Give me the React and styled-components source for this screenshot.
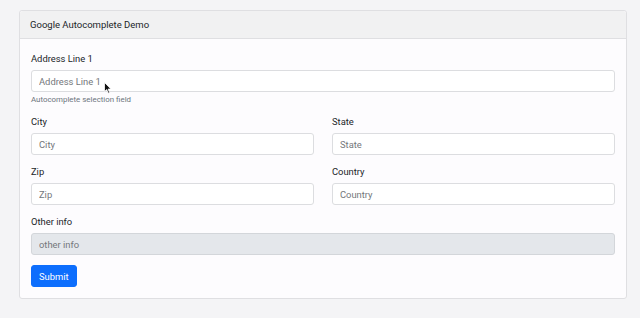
import styled, { createGlobalStyle } from "styled-components";

const Global = createGlobalStyle`
    html, body{
        margin: 0;
        padding: 0;
        background: #f4f4f6;
        font-family: Roboto, "Liberation Sans", Arial, sans-serif;
        color: #212529;
    }
    *{
        box-sizing: border-box;
    }
`

export default function App(){
    return(
        <>
            <Global/>
            <Page>
                <Card>
                    <CardHeader>Google Autocomplete Demo</CardHeader>
                    <CardBody>
                        <Field>
                            <Label>Address Line 1</Label>
                            <InputWrap>
                                <Input placeholder="Address Line 1"/>
                                <Cursor width="8" height="12" viewBox="0 0 8 12">
                                    <path d="M0.5 0.5 L0.5 9.5 L2.7 7.6 L4.3 11.2 L5.6 10.6 L4.1 7.1 L7 7.1 Z" fill="#111" stroke="#fff" strokeWidth="0.8"/>
                                </Cursor>
                            </InputWrap>
                            <Help>Autocomplete selection field</Help>
                        </Field>
                        <Row>
                            <Field>
                                <Label>City</Label>
                                <Input placeholder="City"/>
                            </Field>
                            <Field>
                                <Label>State</Label>
                                <Input placeholder="State"/>
                            </Field>
                        </Row>
                        <Row>
                            <Field>
                                <Label>Zip</Label>
                                <Input placeholder="Zip"/>
                            </Field>
                            <Field>
                                <Label>Country</Label>
                                <Input placeholder="Country"/>
                            </Field>
                        </Row>
                        <Field>
                            <Label>Other info</Label>
                            <Input placeholder="other info" disabled/>
                        </Field>
                        <Submit type="button">Submit</Submit>
                    </CardBody>
                </Card>
            </Page>
        </>
    )
}

const Page = styled.div`
    padding: 10px 13px 20px 19px;
`
const Card = styled.div`
    background: #fdfcfe;
    border: 1px solid #dfdfe2;
    border-radius: 3px;
`
const CardHeader = styled.div`
    height: 28px;
    display: flex;
    align-items: center;
    padding: 0 10px;
    background: #f1f1f2;
    border-bottom: 1px solid #dfdfe2;
    border-radius: 3px 3px 0 0;
    font-size: 9.5px;
`
const CardBody = styled.div`
    padding: 12px 11px 11px;
    display: flex;
    flex-direction: column;
    gap: 9px;
    & > button{
        align-self: flex-start;
        margin-top: 1px;
    }
`
const Row = styled.div`
    display: grid;
    grid-template-columns: 1fr 1fr;
    column-gap: 18px;
`
const Field = styled.div`
    display: flex;
    flex-direction: column;
`
const Label = styled.label`
    font-size: 9.4px;
    line-height: 15px;
    margin-bottom: 4px;
`
const InputWrap = styled.div`
    position: relative;
`
const Input = styled.input`
    display: block;
    width: 100%;
    height: 22px;
    padding: 0 7px;
    border: 1px solid #dcdde0;
    border-radius: 3px;
    background: #fff;
    font-family: Roboto, "Liberation Sans", Arial, sans-serif;
    font-size: 9.4px;
    color: #212529;
    outline: none;
    &::placeholder{
        color: #74777b;
    }
    &:disabled{
        background: #e4e7eb;
        border-color: #d3d6da;
    }
`
const Cursor = styled.svg`
    position: absolute;
    left: 73px;
    top: 12px;
`
const Help = styled.div`
    margin-top: 2px;
    font-size: 7.9px;
    line-height: 11px;
    color: #6c757d;
`
const Submit = styled.button`
    height: 22px;
    padding: 0 7px;
    border: 1px solid #0d6efd;
    border-radius: 3px;
    background: #0d6efd;
    color: #fff;
    font-family: Roboto, "Liberation Sans", Arial, sans-serif;
    font-size: 9.4px;
`
